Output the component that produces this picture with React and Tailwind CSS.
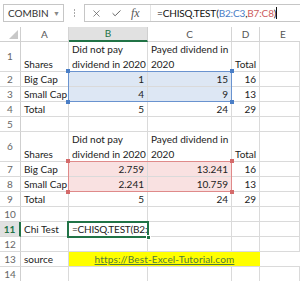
import { X, Check } from "lucide-react";

const font = { fontFamily: "Lato, 'Liberation Sans', sans-serif" };

const rows = [
  { n: 1, tall: true, cells: ["Shares", "Did not pay\ndividend in 2020", "Payed dividend in\n2020", "Total", ""] },
  { n: 2, cells: ["Big Cap", "1", "15", "16", ""] },
  { n: 3, cells: ["Small Cap", "4", "9", "13", ""] },
  { n: 4, cells: ["Total", "5", "24", "29", ""] },
  { n: 5, cells: ["", "", "", "", ""] },
  { n: 6, tall: true, cells: ["Shares", "Did not pay\ndividend in 2020", "Payed dividend in\n2020", "Total", ""] },
  { n: 7, cells: ["Big Cap", "2.759", "13.241", "16", ""] },
  { n: 8, cells: ["Small Cap", "2.241", "10.759", "13", ""] },
  { n: 9, cells: ["Total", "5", "24", "29", ""] },
  { n: 10, cells: ["", "", "", "", ""] },
  { n: 11, cells: ["Chi Test", "=CHISQ.TEST(B2:", "", "", ""] },
  { n: 12, cells: ["", "", "", "", ""] },
  { n: 13, link: true, cells: ["source", "", "", "", ""] },
  { n: 14, cells: ["", "", "", "", ""] },
];

const widths = ["w-[48px]", "w-[79px]", "w-[84px]", "w-[28px]", "flex-1"];
const fills = {
  "2-1": "bg-[#dde7f4]", "2-2": "bg-[#dde7f4]", "3-1": "bg-[#dde7f4]", "3-2": "bg-[#dde7f4]",
  "7-1": "bg-[#f9e1e1]", "7-2": "bg-[#f9e1e1]", "8-1": "bg-[#f9e1e1]", "8-2": "bg-[#f9e1e1]",
};

function Handle({ className }) {
  return <div className={"absolute w-[4px] h-[4px] " + className} />;
}

function Row({ row }) {
  const h = row.tall ? "h-[30px]" : "h-[15px]";
  const active = row.n === 11;
  return (
    <div className={"flex " + h}>
      <div
        className={
          "w-[21px] shrink-0 flex items-center justify-center border-b border-[#dadada] " +
          (active
            ? "bg-[#e1e1e1] text-[#217346] font-bold border-r-2 border-r-[#217346]"
            : "bg-white text-[#666] border-r border-r-[#cfcfcf]")
        }
      >
        {row.n}
      </div>
      {row.link ? (
        <>
          <div className="w-[48px] shrink-0 border-r border-b border-[#dadada] flex items-end pl-[3px] leading-[14px]">
            source
          </div>
          <div className="w-[191px] shrink-0 border-b border-[#dadada] bg-[#ffff00] flex items-end justify-center leading-[14px]">
            <span className="underline text-[#4f7a3c] tracking-[0.15px]">https://Best-Excel-Tutorial.com</span>
          </div>
          <div className="flex-1 border-b border-[#dadada]" />
        </>
      ) : (
        row.cells.map((c, i) => {
          const num = /^[\d.]+$/.test(c);
          return (
            <div
              key={i}
              className={
                widths[i] +
                " shrink-0 overflow-hidden whitespace-pre border-r border-b border-[#dadada] flex items-end leading-[14.5px] " +
                (num ? "justify-end pr-[3px] " : "pl-[3px] ") +
                (active && i === 1 ? "tracking-[-0.2px] " : "") +
                (fills[row.n + "-" + i] || "")
              }
            >
              <span>{c}</span>
            </div>
          );
        })
      )}
    </div>
  );
}

export default function App() {
  return (
    <div className="w-[300px] h-[281px] overflow-hidden bg-white text-[10px] text-[#222]" style={font}>
      <div className="h-[27px] flex items-start pt-[4px] bg-white">
        <div className="ml-[3px] w-[61px] h-[18px] border border-[#c6c6c6] flex items-center pl-[4px] pr-[3px] text-[#333]">
          <span className="flex-1">COMBIN</span>
          <span className="text-[7px] text-[#888]">▼</span>
        </div>
        <div className="w-[20px] h-[18px] flex flex-col items-center justify-center gap-[1px]">
          <div className="w-[1px] h-[2px] bg-[#aaa]" />
          <div className="w-[1px] h-[2px] bg-[#aaa]" />
          <div className="w-[1px] h-[2px] bg-[#aaa]" />
        </div>
        <div className="flex-1 h-[18px] border-y border-l border-[#c6c6c6] flex items-center">
          <div className="w-[66px] h-full flex items-center justify-around pl-[2px] pr-[6px] text-[#555] border-r border-[#e4e4e4]">
            <X size={11} strokeWidth={1.5} />
            <Check size={11} strokeWidth={2} />
            <span className="italic text-[12px] leading-none" style={{ fontFamily: "'Liberation Serif', serif" }}>fx</span>
          </div>
          <div className="pl-[6px] flex items-center whitespace-nowrap text-[#111] tracking-[-0.15px]">
            <span>=CHISQ.TEST(</span>
            <span className="text-[#4a7ec6]">B2:C3</span>
            <span>,</span>
            <span className="text-[#cc5b5b]">B7:C8</span>
            <span>)</span>
            <span className="w-[1px] h-[12px] bg-[#111]" />
          </div>
        </div>
      </div>

      <div className="relative">
        <div className="flex h-[15px] text-[#555]">
          <div className="w-[21px] shrink-0 relative border-r border-b border-[#cfcfcf]">
            <div className="absolute right-[2px] bottom-[2px] w-0 h-0 border-l-[9px] border-l-transparent border-b-[9px] border-b-[#c8c8c8]" />
          </div>
          <div className="w-[48px] shrink-0 flex items-center justify-center border-r border-b border-[#d4d4d4]">A</div>
          <div className="w-[79px] shrink-0 flex items-center justify-center bg-[#e1e1e1] text-[#217346] border-r border-[#cfcfcf] border-b-2 border-b-[#217346]">B</div>
          <div className="w-[84px] shrink-0 flex items-center justify-center border-r border-b border-[#d4d4d4]">C</div>
          <div className="w-[28px] shrink-0 flex items-center justify-center border-r border-b border-[#d4d4d4]">D</div>
          <div className="flex-1 flex items-center justify-center border-b border-[#d4d4d4] pl-[6px]">E</div>
        </div>
        {rows.map((r) => (
          <Row key={r.n} row={r} />
        ))}

        <div className="absolute left-[68px] top-[44px] w-[164px] h-[31px] border border-[#6a93cf]">
          <Handle className="-left-[3px] -top-[3px] bg-[#4a7ec6]" />
          <Handle className="-right-[3px] -top-[3px] bg-[#4a7ec6]" />
          <Handle className="-left-[3px] -bottom-[3px] bg-[#4a7ec6]" />
          <Handle className="-right-[3px] -bottom-[3px] bg-[#4a7ec6]" />
        </div>
        <div className="absolute left-[68px] top-[134px] w-[164px] h-[31px] border border-[#df8a8a]">
          <Handle className="-left-[3px] -top-[3px] bg-[#d46a6a]" />
          <Handle className="-right-[3px] -top-[3px] bg-[#d46a6a]" />
          <Handle className="-left-[3px] -bottom-[3px] bg-[#d46a6a]" />
          <Handle className="-right-[3px] -bottom-[3px] bg-[#d46a6a]" />
        </div>
        <div className="absolute left-[67px] top-[194px] w-[82px] h-[17px] border-2 border-[#217346]">
          <div className="absolute -right-[4px] -bottom-[4px] w-[5px] h-[5px] bg-[#217346] border border-white" />
        </div>
      </div>
    </div>
  );
}
